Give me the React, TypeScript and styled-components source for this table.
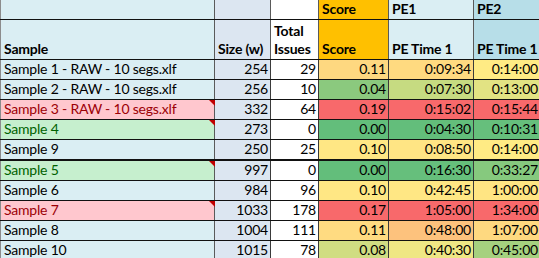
import React from 'react';
import styled, { createGlobalStyle } from 'styled-components';

const GlobalStyle = createGlobalStyle`
  html, body {
    margin: 0;
    padding: 0;
    background: #ffffff;
  }
  body {
    font-family: Lato, "Liberation Sans", sans-serif;
    font-size: 14px;
    letter-spacing: -0.2px;
    color: #000;
  }
`;

const Sheet = styled.table`
  border-collapse: collapse;
  table-layout: fixed;
  width: 540px;
  border-left: 1px solid #8c8c8c;
`;

const Col = styled.col<{ w: number }>`
  width: ${p => p.w}px;
`;

const HeadCell = styled.th<{ bg: string; h: number }>`
  box-sizing: border-box;
  height: ${p => p.h}px;
  background: ${p => p.bg};
  font-weight: 700;
  text-align: left;
  vertical-align: bottom;
  padding: 0 2px 1px 3px;
  line-height: 18px;
  white-space: nowrap;
  border-right: 1px solid #5a5a5a;
  border-bottom: 1px solid #111;
  overflow: hidden;
`;

const Row = styled.tr<{ thick?: boolean }>`
  & > td {
    box-sizing: border-box;
    height: 20px;
    border-bottom: ${p => (p.thick ? '2px' : '1px')} solid #111;
  }
`;

const NameCell = styled.td<{ tone: 'plain' | 'bad' | 'good' }>`
  position: relative;
  background: ${p => (p.tone === 'bad' ? '#FFC7CE' : p.tone === 'good' ? '#C6EFCE' : '#DAEEF3')};
  color: ${p => (p.tone === 'bad' ? '#9C0006' : p.tone === 'good' ? '#006100' : '#000')};
  padding: 0 3px 1px 3px;
  vertical-align: bottom;
  line-height: 18px;
  white-space: nowrap;
  overflow: visible;
  border-right: 1px solid #5a5a5a;
`;

const CommentMark = styled.span`
  position: absolute;
  top: 0;
  right: -1px;
  width: 0;
  height: 0;
  border-top: 6px solid #c00000;
  border-left: 6px solid transparent;
`;

const NumCell = styled.td<{ bg: string }>`
  background: ${p => p.bg};
  text-align: right;
  padding: 0 2px 1px 2px;
  vertical-align: bottom;
  line-height: 18px;
  white-space: nowrap;
  overflow: hidden;
  border-right: 1px solid #3a3a3a;
`;

type Tone = 'plain' | 'bad' | 'good';

interface Sample {
  name: string;
  tone: Tone;
  note?: boolean;
  size: number;
  issues: number;
  score: [string, string];
  pe1: [string, string];
  pe2: [string, string];
  thick?: boolean;
}

const samples: Sample[] = [
  { name: 'Sample 1 - RAW - 10 segs.xlf', tone: 'plain', size: 254, issues: 29, score: ['0.11', '#FED880'], pe1: ['0:09:34', '#FFDA80'], pe2: ['0:14:00', '#FFEB84'] },
  { name: 'Sample 2 - RAW - 10 segs.xlf', tone: 'plain', size: 256, issues: 10, score: ['0.04', '#8BC97E'], pe1: ['0:07:30', '#C6DB81'], pe2: ['0:13:00', '#E2E383'] },
  { name: 'Sample 3 - RAW - 10 segs.xlf', tone: 'bad', note: true, size: 332, issues: 64, score: ['0.19', '#F8696B'], pe1: ['0:15:02', '#F8696B'], pe2: ['0:15:44', '#F8696B'] },
  { name: 'Sample 4', tone: 'good', note: true, size: 273, issues: 0, score: ['0.00', '#63BE7B'], pe1: ['0:04:30', '#63BE7B'], pe2: ['0:10:31', '#66BF7C'] },
  { name: 'Sample 9', tone: 'plain', size: 250, issues: 25, score: ['0.10', '#FFE784'], pe1: ['0:08:50', '#FFE584'], pe2: ['0:14:00', '#FFEB84'], thick: true },
  { name: 'Sample 5', tone: 'good', note: true, size: 997, issues: 0, score: ['0.00', '#63BE7B'], pe1: ['0:16:30', '#66BF7C'], pe2: ['0:33:27', '#86C97E'] },
  { name: 'Sample 6', tone: 'plain', size: 984, issues: 96, score: ['0.10', '#FFE784'], pe1: ['0:42:45', '#FFE784'], pe2: ['1:00:00', '#FFE583'] },
  { name: 'Sample 7', tone: 'bad', note: true, size: 1033, issues: 178, score: ['0.17', '#F8696B'], pe1: ['1:05:00', '#F8696B'], pe2: ['1:34:00', '#F8696B'] },
  { name: 'Sample 8', tone: 'plain', size: 1004, issues: 111, score: ['0.11', '#FFDB81'], pe1: ['0:48:00', '#FDC27D'], pe2: ['1:07:00', '#FED980'] },
  { name: 'Sample 10', tone: 'plain', size: 1015, issues: 78, score: ['0.08', '#D0DD82'], pe1: ['0:40:30', '#EFE784'], pe2: ['0:45:00', '#A5D17F'] },
];

const App: React.FC = () => {
  return (
    <>
      <GlobalStyle />
      <Sheet>
        <colgroup>
          <Col w={214} />
          <Col w={56} />
          <Col w={48} />
          <Col w={70} />
          <Col w={85} />
          <Col w={67} />
        </colgroup>
        <thead>
          <tr>
            <HeadCell h={17} bg="#DAEEF3" />
            <HeadCell h={17} bg="#DCE6F1" />
            <HeadCell h={17} bg="#FFFFFF" />
            <HeadCell h={17} bg="#FFC000">Score</HeadCell>
            <HeadCell h={17} bg="#DAEEF3">PE1</HeadCell>
            <HeadCell h={17} bg="#B7DEE8">PE2</HeadCell>
          </tr>
          <tr>
            <HeadCell h={40} bg="#DAEEF3">Sample</HeadCell>
            <HeadCell h={40} bg="#DCE6F1">Size (w)</HeadCell>
            <HeadCell h={40} bg="#FFFFFF">
              Total
              <br />
              Issues
            </HeadCell>
            <HeadCell h={40} bg="#FFC000">Score</HeadCell>
            <HeadCell h={40} bg="#DAEEF3">PE Time 1</HeadCell>
            <HeadCell h={40} bg="#B7DEE8">PE Time 1</HeadCell>
          </tr>
        </thead>
        <tbody>
          {samples.map(s => (
            <Row key={s.name} thick={s.thick}>
              <NameCell tone={s.tone}>
                {s.name}
                {s.note && <CommentMark />}
              </NameCell>
              <NumCell bg="#DCE6F1">{s.size}</NumCell>
              <NumCell bg="#FFFFFF">{s.issues}</NumCell>
              <NumCell bg={s.score[1]}>{s.score[0]}</NumCell>
              <NumCell bg={s.pe1[1]}>{s.pe1[0]}</NumCell>
              <NumCell bg={s.pe2[1]}>{s.pe2[0]}</NumCell>
            </Row>
          ))}
        </tbody>
      </Sheet>
    </>
  );
};

export default App;
